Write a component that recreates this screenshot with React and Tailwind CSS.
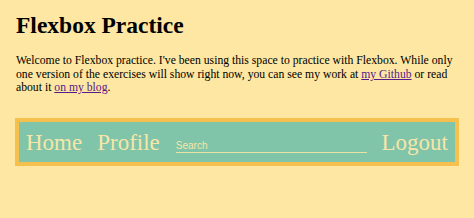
import React from 'react';

const serif = { fontFamily: '"Liberation Serif", "Times New Roman", serif' };

const App = () => {
  return (
    <div className="min-h-[218px] w-full bg-[#fde7a2] px-[15px] pt-[11px] pb-4 text-black" style={serif}>
      <h1 className="pl-[1px] text-[23.5px] font-bold leading-[28px]">Flexbox Practice</h1>
      <p className="mt-[15px] pl-[1px] text-[11.7px] leading-[13.7px]">
        Welcome to Flexbox practice. I've been using this space to practice with Flexbox. While only
        one version of the exercises will show right now, you can see my work at{' '}
        <a href="#" className="text-[#551a8b] underline">my Github</a> or read about it{' '}
        <a href="#" className="text-[#551a8b] underline">on my blog</a>.
      </p>
      <nav className="mt-[23px] flex h-[48px] items-center border-4 border-[#f6c04f] bg-[#80c4aa] px-[7px] text-[23px] leading-none text-[#f6e7a8]">
        <a href="#" className="mr-[15px]">Home</a>
        <a href="#" className="mr-[16px]">Profile</a>
        <input
          type="text"
          placeholder="Search"
          className="mt-[8px] w-[191px] border-b border-[#e9e2a6] bg-transparent pb-[1px] text-[10px] leading-none text-[#f6e7a8] outline-none placeholder:text-[#f6e7a8]"
          style={{ fontFamily: '"Liberation Sans", Arial, sans-serif' }}
        />
        <a href="#" className="ml-auto">Logout</a>
      </nav>
    </div>
  );
};

export default App;
